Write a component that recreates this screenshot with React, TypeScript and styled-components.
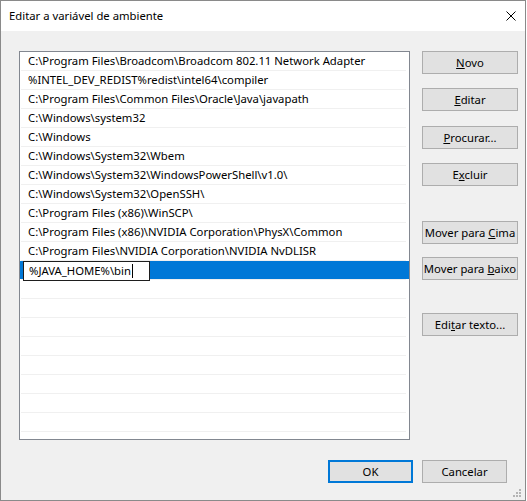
import styled, { createGlobalStyle } from 'styled-components';

const GlobalStyle = createGlobalStyle`
  html, body {
    margin: 0;
    padding: 0;
    background: #ffffff;
  }
  body {
    font-family: "Noto Sans", "Open Sans", sans-serif;
    font-size: 11.3px;
    color: #000000;
  }
`;

const Window = styled.div`
  position: relative;
  box-sizing: border-box;
  width: 526px;
  height: 501px;
  border: 1px solid #8a8a8a;
  background: #f0f0f0;
  display: flex;
  flex-direction: column;
`;

const TitleBar = styled.div`
  height: 30px;
  background: #ffffff;
  display: flex;
  align-items: center;
  justify-content: space-between;
  padding: 0 9px 0 8px;
`;

const TitleText = styled.span`
  line-height: 16px;
  margin-top: -1px;
`;

const CloseIcon = styled.svg`
  width: 10px;
  height: 10px;
  margin-top: -1px;
`;

const Body = styled.div`
  flex: 1;
  display: flex;
  flex-direction: column;
  padding: 20px 7px 0 18px;
`;

const MainRow = styled.div`
  display: flex;
  gap: 12px;
`;

const ListBox = styled.div`
  box-sizing: border-box;
  width: 391px;
  height: 389px;
  border: 1px solid #828790;
  background: #ffffff;
  overflow: hidden;
`;

const Row = styled.div<{ $selected?: boolean }>`
  position: relative;
  height: 19px;
  line-height: 18px;
  padding-left: 8px;
  white-space: nowrap;

  &::before {
    content: '';
    position: absolute;
    left: 0;
    right: 0;
    top: 0;
    height: 18px;
    background: ${(p) => (p.$selected ? '#0078d7' : 'transparent')};
  }

  &::after {
    content: '';
    position: absolute;
    left: 1px;
    right: 3px;
    bottom: 0;
    height: 1px;
    background: #f0f0f0;
  }
`;

const RowText = styled.span`
  position: relative;
`;

const EditBox = styled.div`
  position: absolute;
  left: 3px;
  top: 0;
  z-index: 1;
  box-sizing: border-box;
  width: 127px;
  height: 20px;
  border: 1px solid #1e1e1e;
  background: #ffffff;
  padding-left: 5px;
  line-height: 17px;
`;

const Caret = styled.span`
  display: inline-block;
  width: 1px;
  height: 14px;
  background: #000000;
  vertical-align: -3px;
  margin-left: 1px;
`;

const ButtonColumn = styled.div`
  display: flex;
  flex-direction: column;
  width: 96px;
`;

const Button = styled.div<{ $top?: number; $width?: number; $default?: boolean }>`
  box-sizing: border-box;
  width: ${(p) => p.$width ?? 96}px;
  height: 23px;
  margin-top: ${(p) => p.$top ?? 0}px;
  background: #e1e1e1;
  border: ${(p) => (p.$default ? '2px solid #0078d7' : '1px solid #adadad')};
  display: flex;
  align-items: center;
  justify-content: center;
  white-space: nowrap;
  line-height: 16px;
`;

const Label = styled.span`
  white-space: pre;
`;

const Footer = styled.div`
  display: flex;
  justify-content: flex-end;
  gap: 9px;
  margin-top: 20px;
  padding-right: 11px;
`;

const Grip = styled.svg`
  position: absolute;
  right: 3px;
  bottom: 2px;
  width: 9px;
  height: 9px;
`;

const paths = [
  'C:\\Program Files\\Broadcom\\Broadcom 802.11 Network Adapter',
  '%INTEL_DEV_REDIST%redist\\intel64\\compiler',
  'C:\\Program Files\\Common Files\\Oracle\\Java\\javapath',
  'C:\\Windows\\system32',
  'C:\\Windows',
  'C:\\Windows\\System32\\Wbem',
  'C:\\Windows\\System32\\WindowsPowerShell\\v1.0\\',
  'C:\\Windows\\System32\\OpenSSH\\',
  'C:\\Program Files (x86)\\WinSCP\\',
  'C:\\Program Files (x86)\\NVIDIA Corporation\\PhysX\\Common',
  'C:\\Program Files\\NVIDIA Corporation\\NVIDIA NvDLISR',
];

const emptyRows = 10;

const App: React.FC = () => {
  return (
    <>
      <GlobalStyle />
      <Window>
        <TitleBar>
          <TitleText>Editar a variável de ambiente</TitleText>
          <CloseIcon viewBox="0 0 10 10">
            <path d="M0.5 0.5 L9.5 9.5 M9.5 0.5 L0.5 9.5" stroke="#000" strokeWidth="1" fill="none" />
          </CloseIcon>
        </TitleBar>
        <Body>
          <MainRow>
            <ListBox>
              {paths.map((p) => (
                <Row key={p}>
                  <RowText>{p}</RowText>
                </Row>
              ))}
              <Row $selected>
                <EditBox>
                  %JAVA_HOME%\bin
                  <Caret />
                </EditBox>
              </Row>
              {Array.from({ length: emptyRows }).map((_, i) => (
                <Row key={`empty-${i}`} />
              ))}
            </ListBox>
            <ButtonColumn>
              <Button>
                <Label><u>N</u>ovo</Label>
              </Button>
              <Button $top={14}>
                <Label><u>E</u>ditar</Label>
              </Button>
              <Button $top={15}>
                <Label><u>P</u>rocurar...</Label>
              </Button>
              <Button $top={14}>
                <Label>E<u>x</u>cluir</Label>
              </Button>
              <Button $top={35}>
                <Label>Mover para <u>C</u>ima</Label>
              </Button>
              <Button $top={13}>
                <Label>Mover para <u>b</u>aixo</Label>
              </Button>
              <Button $top={33}>
                <Label>Edi<u>t</u>ar texto...</Label>
              </Button>
            </ButtonColumn>
          </MainRow>
          <Footer>
            <Button $width={85} $default>
              <Label>OK</Label>
            </Button>
            <Button $width={85}>
              <Label>Cancelar</Label>
            </Button>
          </Footer>
        </Body>
        <Grip viewBox="0 0 9 9">
          <g fill="#b4b4b4">
            <rect x="6" y="0" width="2" height="2" />
            <rect x="3" y="3" width="2" height="2" />
            <rect x="6" y="3" width="2" height="2" />
            <rect x="0" y="6" width="2" height="2" />
            <rect x="3" y="6" width="2" height="2" />
            <rect x="6" y="6" width="2" height="2" />
          </g>
        </Grip>
      </Window>
    </>
  );
};

export default App;
